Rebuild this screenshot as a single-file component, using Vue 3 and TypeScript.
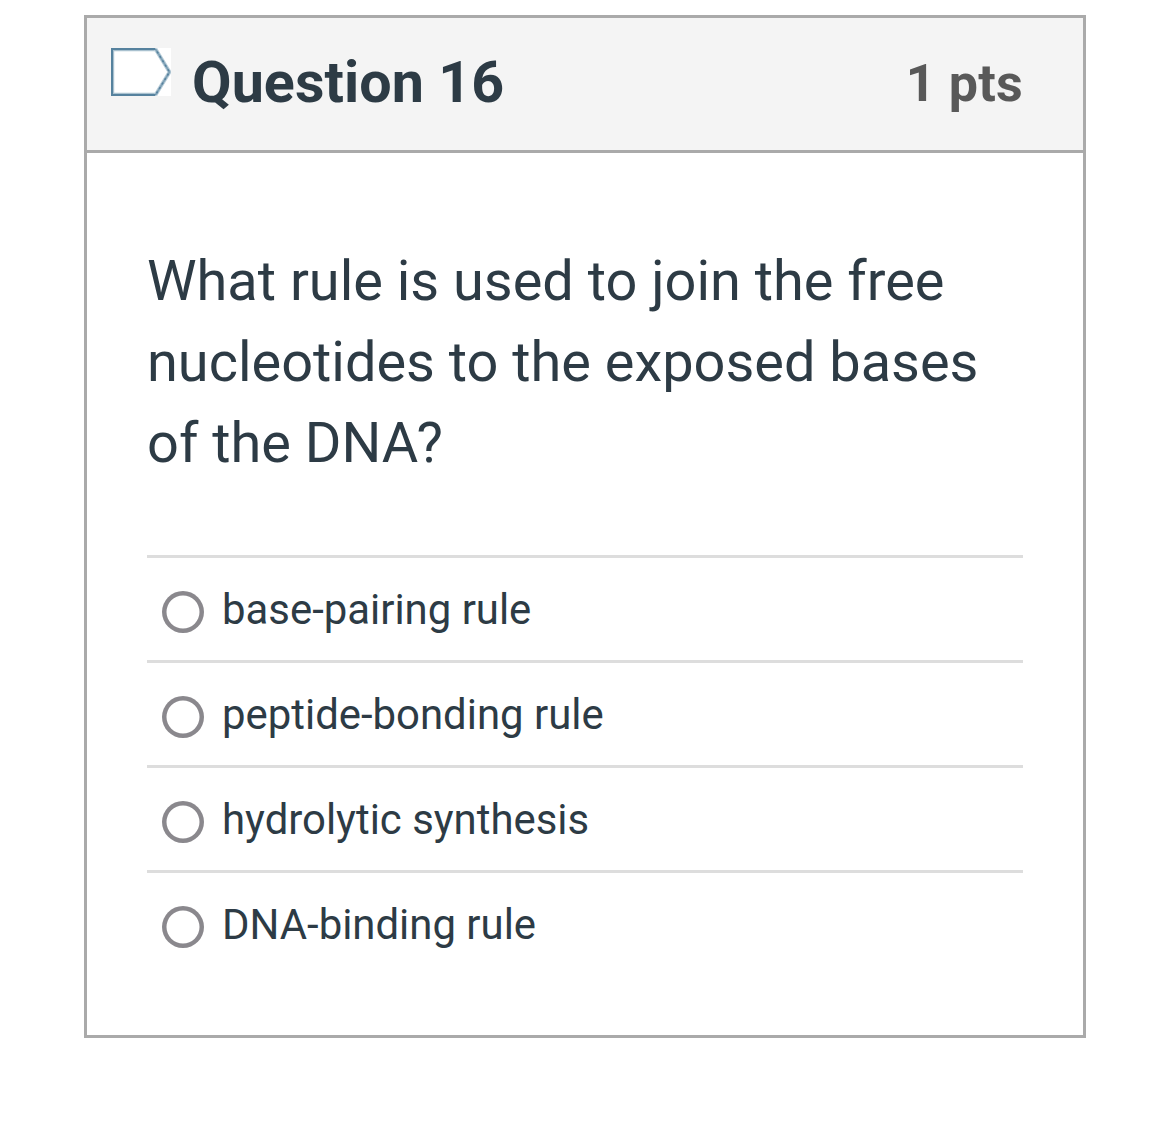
<script setup lang="ts">
const answers: string[] = ['base-pairing rule', 'peptide-bonding rule', 'hydrolytic synthesis', 'DNA-binding rule']
</script>

<template>
  <main class="question">
    <header class="header">
      <svg class="flag" width="60" height="48" viewBox="0 0 60 48">
        <rect width="60" height="48" fill="#fff" />
        <path d="M45 2.5H2.5V45.5H45" fill="none" stroke="#a9c1cf" stroke-width="1.4" />
        <path d="M44.5 1L58.5 24L44.5 47" fill="none" stroke="#b9cdd9" stroke-width="3.8" />
        <path d="M44.5 1L58.5 24L44.5 47" fill="none" stroke="#7fa1b6" stroke-width="1.8" />
        <path d="M44.5 1L58.5 24L44.5 47" fill="none" stroke="#56829e" stroke-width="1.6" stroke-dasharray="2 3.2" stroke-dashoffset="-3" />
        <path d="M44.5 1H1V47H44.5" fill="none" stroke="#56829e" stroke-width="2" />
      </svg>
      <h1 class="title">Question 16</h1>
      <span class="points">1 pts</span>
    </header>
    <section class="body">
      <p class="prompt">What rule is used to join the free<br />nucleotides to the exposed bases<br />of the DNA?</p>
      <label v-for="answer in answers" :key="answer" class="answer">
        <input type="radio" name="answer" class="radio" />
        <span class="text">{{ answer }}</span>
      </label>
    </section>
  </main>
</template>

<style>
body { background: #fff; }
</style>

<style scoped>
.question {
  box-sizing: border-box;
  width: 1002px;
  height: 1023px;
  margin: 15px 0 0 84px;
  border: 3px solid #aaa;
  font-family: Roboto, sans-serif;
  color: #2d3b45;
}
.header {
  box-sizing: border-box;
  display: flex;
  align-items: flex-start;
  height: 135px;
  padding: 30px 60px 0 24px;
  background: #f4f4f4;
  border-bottom: 3px solid #aaa;
}
.flag { display: block; flex: none; }
.title {
  margin: 0 0 0 21px;
  font-size: 57.4px;
  line-height: 70px;
  font-weight: 700;
  letter-spacing: 0.08px;
  white-space: nowrap;
}
.points {
  margin-left: auto;
  font-size: 52px;
  line-height: 72px;
  font-weight: 700;
  letter-spacing: 0.2px;
  color: #595959;
}
.body { padding: 88px 60px 0; }
.prompt {
  margin: 0 0 71px;
  font-size: 55.9px;
  line-height: 81px;
  white-space: nowrap;
}
.answer {
  box-sizing: border-box;
  display: flex;
  align-items: flex-start;
  height: 105px;
  border-top: 3px solid #ddd;
  padding: 33px 0 0 15px;
}
.radio {
  appearance: none;
  flex: none;
  width: 42px;
  height: 42px;
  margin: 0 18px 0 0;
  border-radius: 50%;
  background: #fff;
  box-shadow: inset 0 0 0 4.5px #8a888d;
}
.text { font-size: 41.9px; line-height: 38px; white-space: nowrap; }
</style>
